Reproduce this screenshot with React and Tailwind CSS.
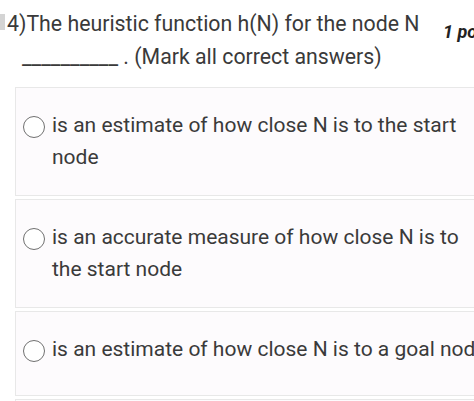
export default function App() {
  const options = [
    ["is an estimate of how close N is to the start", "node"],
    ["is an accurate measure of how close N is to", "the start node"],
    ["is an estimate of how close N is to a goal node"],
  ];
  const heights = ["h-[109px]", "h-[109px]", "h-[85px]"];

  return (
    <div
      className="relative w-[474px] h-[401px] overflow-hidden bg-white text-[#3a3a3a]"
      style={{ fontFamily: "Roboto, 'Liberation Sans', sans-serif" }}
    >
      <div className="absolute left-0 top-[14px] w-[5px] h-[16px] bg-[#d4d4d4]" />
      <div className="flex pt-[7px] pl-[7px]">
        <div className="w-[438px] shrink-0 text-[21.3px] leading-[33px] whitespace-nowrap">
          <div>4)The heuristic function h(N) for the node N</div>
          <div className="pl-[15px]">__________ . (Mark all correct answers)</div>
        </div>
        <div className="pt-[11px] -ml-[2px] shrink-0 text-[18px] font-bold italic whitespace-nowrap text-[#222]">
          1 point
        </div>
      </div>

      <div className="mt-[14px] ml-[15px] w-[520px] flex flex-col gap-[3px]">
        {options.map((lines, i) => (
          <div
            key={i}
            className={`${heights[i]} border border-[#e8e8e8] bg-[#fdfbfd] flex items-start pt-[21px] pl-[7px]`}
          >
            <div className="mt-[7px] w-[22px] h-[22px] shrink-0 rounded-full border-[1.5px] border-[#707070] bg-white" />
            <div className="ml-[7px] text-[21px] leading-[32px] whitespace-nowrap">
              {lines.map((l, j) => (
                <div key={j}>{l}</div>
              ))}
            </div>
          </div>
        ))}
        <div className="h-[20px] border border-[#e8e8e8] bg-[#fdfbfd]" />
      </div>
    </div>
  );
}
